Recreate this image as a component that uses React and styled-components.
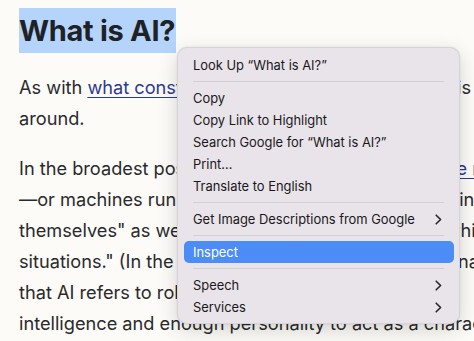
import React from "react";
import styled, { createGlobalStyle } from "styled-components";

const GlobalStyle = createGlobalStyle`
  html, body {
    margin: 0;
    padding: 0;
    background: #fcfbf8;
    overflow: hidden;
  }
  body {
    font-family: Inter, "Liberation Sans", sans-serif;
  }
`;

const Page = styled.div`
  position: relative;
  width: 474px;
  height: 341px;
  overflow: hidden;
  padding: 8px 0 0 19px;
  box-sizing: border-box;
  color: #2a2a2c;
`;

const Title = styled.h1`
  margin: 0;
  font-size: 29px;
  font-weight: 700;
  letter-spacing: -0.3px;
  color: #1e2227;
  line-height: 45px;
  span {
    display: inline-block;
    background: #b5d4fb;
    padding: 0 1px 0 0;
  }
`;

const Para = styled.p`
  margin: 19px 0 0;
  font-size: 18.2px;
  line-height: 31px;
`;

const Line = styled.span`
  display: block;
  white-space: nowrap;
`;

const Link = styled.a`
  color: #2c3a93;
  text-decoration: underline;
  text-underline-offset: 3px;
  text-decoration-thickness: 1px;
`;

const Menu = styled.div`
  position: absolute;
  left: 177px;
  top: 47px;
  width: 283px;
  box-sizing: border-box;
  padding: 6px 5px 5px 6px;
  background: #e9e4e9;
  border: 1px solid rgba(0, 0, 0, 0.07);
  border-radius: 10px;
  box-shadow: 0 6px 20px rgba(0, 0, 0, 0.16), 0 0 2px rgba(0, 0, 0, 0.1);
  font-family: Inter, "Liberation Sans", sans-serif;
  font-size: 12.9px;
  color: #1a181b;
`;

const Item = styled.div`
  display: flex;
  align-items: center;
  justify-content: space-between;
  height: 22px;
  padding: 0 12px 0 9px;
  border-radius: 5px;
  background: ${(p) => (p.active ? "#4b8cf5" : "transparent")};
  color: ${(p) => (p.active ? "#ffffff" : "inherit")};
`;

const Separator = styled.div`
  height: 11px;
  display: flex;
  align-items: center;
  padding: 0 10px 0 9px;
  &::after {
    content: "";
    flex: 1;
    height: 1px;
    background: #d3ced3;
  }
`;

const Chevron = () => (
  <svg width="7" height="11" viewBox="0 0 7 11">
    <path d="M1.2 1.2 L5.6 5.5 L1.2 9.8" fill="none" stroke="#29262a" strokeWidth="1.6" strokeLinecap="round" strokeLinejoin="round" />
  </svg>
);

const items = [
  { label: "Look Up \u201cWhat is AI?\u201d" },
  { sep: true },
  { label: "Copy" },
  { label: "Copy Link to Highlight" },
  { label: "Search Google for \u201cWhat is AI?\u201d" },
  { label: "Print\u2026" },
  { label: "Translate to English" },
  { sep: true },
  { label: "Get Image Descriptions from Google", sub: true },
  { sep: true },
  { label: "Inspect", active: true },
  { sep: true },
  { label: "Speech", sub: true },
  { label: "Services", sub: true },
];

export default function App() {
  return (
    <>
      <GlobalStyle />
      <Page>
        <Title>
          <span>What is AI?</span>
        </Title>
        <Para>
          <Line>
            As with <Link href="#">what constitutes robots</Link>, what counts as AI is a
          </Line>
          <Line>around.</Line>
        </Para>
        <Para>
          <Line>
            In the broadest possible sense, AI refers to the <Link href="#">large neural</Link>
          </Line>
          <Line>—or machines running software—that can truly, "think</Line>
          <Line>themselves" as well as respond to a vast array of which</Line>
          <Line>situations." (In the popular culture, it's mostly imaginary</Line>
          <Line>that AI refers to robots with human-level smarts or</Line>
          <Line>intelligence and enough personality to act as a character.</Line>
        </Para>
        <Menu>
          {items.map((it, i) =>
            it.sep ? (
              <Separator key={i} />
            ) : (
              <Item key={i} active={it.active}>
                <span>{it.label}</span>
                {it.sub && <Chevron />}
              </Item>
            )
          )}
        </Menu>
      </Page>
    </>
  );
}
